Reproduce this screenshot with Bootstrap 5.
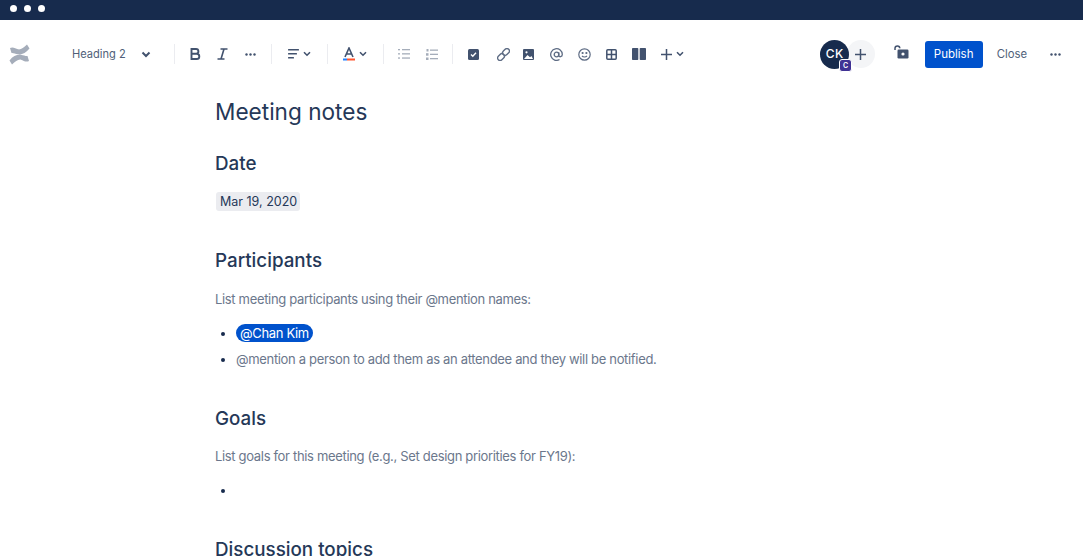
<!DOCTYPE html>
<html lang="en">
<head>
<meta charset="UTF-8" />
<meta name="viewport" content="width=device-width, initial-scale=1.0" />
<title>Meeting notes</title>
<link href="https://cdn.jsdelivr.net/npm/bootstrap@5.3.0/dist/css/bootstrap.min.css" rel="stylesheet" />
<style>
  html, body { height: 556px; overflow: hidden; }
  body { font-family: Inter, "Liberation Sans", sans-serif; color: #253858; background: #fff; }
  .window-bar { height: 20px; background: #172b4d; padding-left: 10px; gap: 7px; padding-top: 5px; }
  .window-dot { width: 7px; height: 7px; border-radius: 50%; background: #fff; }
  .editor-bar { height: 68px; padding-left: 9px; }
  .logo-slot { width: 21px; margin-right: 42px; }
  .style-pick { width: 102px; font-size: 11.1px; color: #505f79; padding-top: 1px; }
  .style-pick span { width: 69px; }
  .tool-sep { width: 1px; height: 20px; background: #ebecf0; flex: none; }
  .tool-slot { width: 27.6px; height: 24px; flex: none; }
  .tool-wide { width: 27px; height: 24px; flex: none; gap: 4px; }
  .plus-slot { margin-left: 6px; }
  .tool-group { padding: 0 6.5px; }
  .insert-group { padding-left: 7px; }
  .tool-group-wide { padding: 0 14px; }
  .avatar-chip { width: 29px; height: 29px; border-radius: 50%; background: #172b4d; color: #fff; font-size: 12px; font-weight: 500; z-index: 1; letter-spacing: .3px; }
  .space-chip { right: -3px; bottom: -3px; width: 13px; height: 13px; border-radius: 3px; background: #403294; color: #fff; font-size: 7px; font-weight: 600; border: 1px solid #fff; line-height: 1; }
  .invite-chip { width: 28px; height: 28px; border-radius: 50%; background: #f4f5f7; margin-left: -2.5px; }
  .publish-btn { width: 58px; height: 27px; padding: 1px 0 0; font-size: 11.5px; background: #0052cc; border: 0; border-radius: 3px; }
  .close-link { color: #505f79; font-size: 11.3px; margin: 1px 23px 0 14px; }
  .lock-slot { margin: 0 15.5px 0 19.5px; }
  .right-tools { margin-left: auto; padding-right: 22px; }
  .page-body { padding-left: 215px; width: 720px; }
  .note-title { font-size: 22.6px; font-weight: 400; line-height: 28px; margin: 10px 0 0; }
  .note-head { font-size: 18.8px; font-weight: 500; line-height: 24px; margin: 38px 0 0; }
  .date-head { margin-top: 26px; }
  .date-row { margin-top: 16px; padding-left: 1px; }
  .date-pill { background: #ebecf0; border-radius: 3px; font-size: 12.5px; line-height: 19px; padding: 0 3px 0 4px; }
  .hint-text { font-size: 13px; line-height: 20px; color: #6b778c; margin: 16px 0 0; letter-spacing: -0.33px; }
  .goals-hint { margin-top: 15px; }
  .note-list { margin: 14px 0 0; padding-left: 21px; font-size: 13px; color: #6b778c; }
  .note-list li { line-height: 20px; letter-spacing: -0.33px; }
  .note-list li + li { margin-top: 6px; }
  .note-list li::marker { color: #172b4d; }
  .mention-pill { background: #0052cc; color: #fff; border-radius: 10px; padding: 1px 4px; }
  svg { display: block; }
</style>
</head>
<body>
  <div class="window-bar d-flex">
    <div class="window-dot"></div>
    <div class="window-dot"></div>
    <div class="window-dot"></div>
  </div>

  <div class="editor-bar d-flex align-items-center">
    <div class="logo-slot">
      <svg width="21" height="21" viewBox="0 0 21 21" fill="#a5adba"><path d="M1 4C4 2.500 6.500 4.500 9 5.300c3 .6 5.500-1.800 9-4.800l2.500 4c-3.500 4.500-8 6.500-11.500 5.800C6 9.800 4 8.500 2.500 9z"/><path transform="rotate(180 10.500 10.500)" d="M1 4C4 2.500 6.500 4.500 9 5.300c3 .6 5.500-1.800 9-4.800l2.500 4c-3.500 4.500-8 6.500-11.500 5.800C6 9.800 4 8.500 2.500 9z"/></svg>
    </div>
    <div class="style-pick d-flex align-items-center">
      <span>Heading 2</span>
      <svg width="10" height="7" viewBox="0 0 10 7" fill="none" stroke="#42526e" stroke-width="2"><path d="M1.500 1.500 5 5l3.500-3.500"/></svg>
    </div>
    <div class="tool-sep"></div>

    <div class="tool-group d-flex align-items-center">
      <div class="tool-slot d-flex align-items-center justify-content-center">
        <svg width="11" height="12" viewBox="0 0 11 12" fill="none" stroke="#42526e" stroke-width="1.900"><path d="M1.500 1h4.500a2.400 2.400 0 0 1 0 4.800H1.500zm0 4.800H6.700a2.600 2.600 0 0 1 0 5.200H1.500z"/></svg>
      </div>
      <div class="tool-slot d-flex align-items-center justify-content-center">
        <svg width="11" height="12" viewBox="0 0 11 12" fill="none" stroke="#42526e" stroke-width="1.600"><path d="M3.500 1h7M.5 11h7M7 1 4 11"/></svg>
      </div>
      <div class="tool-slot d-flex align-items-center justify-content-center">
        <svg width="11" height="3" viewBox="0 0 11 3" fill="#42526e"><circle cx="1.500" cy="1.500" r="1.200"/><circle cx="5.500" cy="1.500" r="1.200"/><circle cx="9.500" cy="1.500" r="1.200"/></svg>
      </div>
    </div>
    <div class="tool-sep"></div>

    <div class="tool-group-wide d-flex align-items-center">
      <div class="tool-wide d-flex align-items-center justify-content-center">
        <svg width="11" height="10" viewBox="0 0 11 10" fill="#42526e"><rect width="11" height="1.600" rx=".6"/><rect y="4" width="9" height="1.600" rx=".6"/><rect y="8" width="6" height="1.600" rx=".6"/></svg>
        <svg width="8" height="6" viewBox="0 0 8 6" fill="none" stroke="#42526e" stroke-width="1.600"><path d="M1 1.200 4 4.200l3-3"/></svg>
      </div>
    </div>
    <div class="tool-sep"></div>

    <div class="tool-group-wide d-flex align-items-center">
      <div class="tool-wide d-flex align-items-center justify-content-center">
        <svg width="12" height="14" viewBox="0 0 12 14"><path d="M2 10 6 1l4 9M3.200 7h5.600" fill="none" stroke="#42526e" stroke-width="1.600"/><rect y="11.500" width="4" height="2" fill="#2684ff"/><rect x="4" y="11.500" width="8" height="2" fill="#ff5630"/></svg>
        <svg width="8" height="6" viewBox="0 0 8 6" fill="none" stroke="#42526e" stroke-width="1.600"><path d="M1 1.200 4 4.200l3-3"/></svg>
      </div>
    </div>
    <div class="tool-sep"></div>

    <div class="tool-group d-flex align-items-center">
      <div class="tool-slot d-flex align-items-center justify-content-center">
        <svg width="12" height="10" viewBox="0 0 12 10" fill="#a5adba"><rect width="2" height="1.300"/><rect x="4" width="8" height="1.300"/><rect y="4.200" width="2" height="1.300"/><rect x="4" y="4.200" width="8" height="1.300"/><rect y="8.400" width="2" height="1.300"/><rect x="4" y="8.400" width="8" height="1.300"/></svg>
      </div>
      <div class="tool-slot d-flex align-items-center justify-content-center">
        <svg width="12" height="11" viewBox="0 0 12 11" fill="#a5adba"><rect x=".5" width="2" height="2.500"/><rect x="4" y=".5" width="8" height="1.300"/><rect y="4.200" width="2.500" height="2.500"/><rect x="4" y="4.700" width="8" height="1.300"/><rect y="8.500" width="2.500" height="2.500"/><rect x="4" y="9" width="8" height="1.300"/></svg>
      </div>
    </div>
    <div class="tool-sep"></div>

    <div class="tool-group insert-group d-flex align-items-center">
      <div class="tool-slot d-flex align-items-center justify-content-center">
        <svg width="11" height="11" viewBox="0 0 11 11"><rect width="11" height="11" rx="1.500" fill="#42526e"/><path d="M3 5.500 4.800 7.300 8 3.800" fill="none" stroke="#fff" stroke-width="1.400"/></svg>
      </div>
      <div class="tool-slot d-flex align-items-center justify-content-center">
        <svg class="ms-1" width="13" height="13" viewBox="0 0 13 13" fill="none" stroke="#5e6c84" stroke-width="1.400"><rect x="6.500" y=".2" width="5" height="7.500" rx="2.500" transform="rotate(45 9 4)"/><rect x="1.500" y="5.300" width="5" height="7.500" rx="2.500" transform="rotate(45 4 9)"/></svg>
      </div>
      <div class="tool-slot d-flex align-items-center justify-content-center">
        <svg width="11" height="11" viewBox="0 0 11 11"><rect width="11" height="11" rx="1" fill="#42526e"/><path d="M1 10 4.500 6l2.500 2.200L8.500 7 10 10z" fill="#fff"/><circle cx="3.500" cy="3.300" r="1.100" fill="#fff"/></svg>
      </div>
      <div class="tool-slot d-flex align-items-center justify-content-center">
        <svg width="13" height="13" viewBox="0 0 13 13" fill="none" stroke="#5e6c84" stroke-width="1.300"><circle cx="6.500" cy="6.500" r="2.300"/><path d="M8.800 4.200v3.300c0 1.800 3.500 1.800 3.500-1A5.800 5.800 0 1 0 9.500 11.500"/></svg>
      </div>
      <div class="tool-slot d-flex align-items-center justify-content-center">
        <svg width="13" height="13" viewBox="0 0 13 13" fill="none" stroke="#5e6c84" stroke-width="1.200"><circle cx="6.500" cy="6.500" r="5.700"/><path d="M4 8c1.300 1.300 3.700 1.300 5 0"/><circle cx="4.600" cy="5" r=".5" fill="#5e6c84"/><circle cx="8.400" cy="5" r=".5" fill="#5e6c84"/></svg>
      </div>
      <div class="tool-slot d-flex align-items-center justify-content-center">
        <svg width="11" height="11" viewBox="0 0 11 11" fill="none" stroke="#42526e" stroke-width="1.500"><rect x=".8" y=".8" width="9.400" height="9.400" rx="1"/><path d="M5.500 1v9M1 5.500h9"/></svg>
      </div>
      <div class="tool-slot d-flex align-items-center justify-content-center">
        <svg width="14" height="12" viewBox="0 0 14 12" fill="#42526e"><rect width="6.300" height="12" rx=".8"/><rect x="7.700" width="6.300" height="12" rx=".8"/></svg>
      </div>
      <div class="tool-wide plus-slot d-flex align-items-center justify-content-center">
        <svg width="11" height="11" viewBox="0 0 11 11" fill="none" stroke="#42526e" stroke-width="1.500"><path d="M5.500 0v11M0 5.500h11"/></svg>
        <svg width="8" height="6" viewBox="0 0 8 6" fill="none" stroke="#42526e" stroke-width="1.600"><path d="M1 1.200 4 4.200l3-3"/></svg>
      </div>
    </div>

    <div class="right-tools d-flex align-items-center">
      <div class="position-relative avatar-chip d-flex align-items-center justify-content-center">
        CK
        <span class="space-chip position-absolute d-flex align-items-center justify-content-center">C</span>
      </div>
      <div class="invite-chip d-flex align-items-center justify-content-center">
        <svg width="11" height="11" viewBox="0 0 11 11" fill="none" stroke="#42526e" stroke-width="1.500"><path d="M5.500 0v11M0 5.500h11"/></svg>
      </div>
      <div class="lock-slot">
        <svg width="15" height="18" viewBox="0 0 15 18"><path d="M1 5V3.300a2.400 2.400 0 0 1 4.800 0" fill="none" stroke="#42526e" stroke-width="1.500"/><rect x="3.500" y="4.500" width="11" height="9" rx="1.200" fill="#42526e"/><circle cx="9" cy="9" r="1.600" fill="#fff"/></svg>
      </div>
      <button class="btn btn-primary publish-btn" type="button">Publish</button>
      <a class="close-link text-decoration-none">Close</a>
      <div>
        <svg width="11" height="3" viewBox="0 0 11 3" fill="#42526e"><circle cx="1.500" cy="1.500" r="1.200"/><circle cx="5.500" cy="1.500" r="1.200"/><circle cx="9.500" cy="1.500" r="1.200"/></svg>
      </div>
    </div>
  </div>

  <main class="page-body">
    <h1 class="note-title">Meeting notes</h1>

    <h2 class="note-head date-head">Date</h2>
    <div class="date-row d-flex"><span class="date-pill">Mar 19, 2020</span></div>

    <h2 class="note-head">Participants</h2>
    <p class="hint-text">List meeting participants using their @mention names:</p>
    <ul class="note-list">
      <li><span class="mention-pill">@Chan Kim</span></li>
      <li>@mention a person to add them as an attendee and they will be notified.</li>
    </ul>

    <h2 class="note-head">Goals</h2>
    <p class="hint-text goals-hint">List goals for this meeting (e.g., Set design priorities for FY19):</p>
    <ul class="note-list">
      <li>&nbsp;</li>
    </ul>

    <h2 class="note-head">Discussion topics</h2>
  </main>

  <script src="https://cdn.jsdelivr.net/npm/bootstrap@5.3.0/dist/js/bootstrap.bundle.min.js"></script>
</body>
</html>
